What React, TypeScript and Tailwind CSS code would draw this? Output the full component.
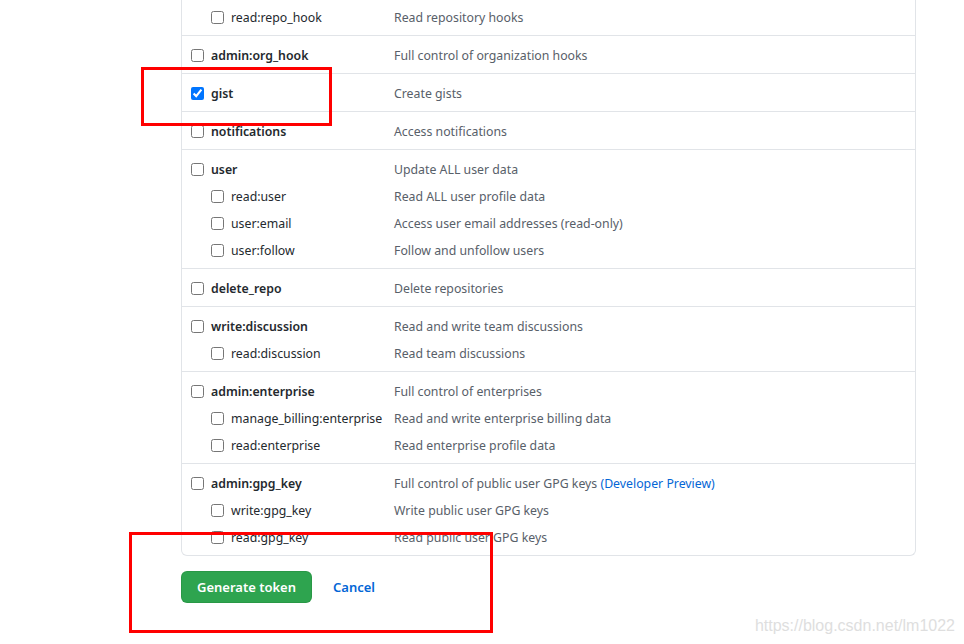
import React from "react";

type Sub = { name: string; desc: string };
type Group = { name: string; desc: React.ReactNode; subs?: Sub[]; checked?: boolean };

const groups: Group[] = [
  { name: "admin:org_hook", desc: "Full control of organization hooks" },
  { name: "gist", desc: "Create gists", checked: true },
  { name: "notifications", desc: "Access notifications" },
  {
    name: "user",
    desc: "Update ALL user data",
    subs: [
      { name: "read:user", desc: "Read ALL user profile data" },
      { name: "user:email", desc: "Access user email addresses (read-only)" },
      { name: "user:follow", desc: "Follow and unfollow users" },
    ],
  },
  { name: "delete_repo", desc: "Delete repositories" },
  {
    name: "write:discussion",
    desc: "Read and write team discussions",
    subs: [{ name: "read:discussion", desc: "Read team discussions" }],
  },
  {
    name: "admin:enterprise",
    desc: "Full control of enterprises",
    subs: [
      { name: "manage_billing:enterprise", desc: "Read and write enterprise billing data" },
      { name: "read:enterprise", desc: "Read enterprise profile data" },
    ],
  },
  {
    name: "admin:gpg_key",
    desc: (
      <>
        Full control of public user GPG keys{" "}
        <span className="text-[#0366d6]">(Developer Preview)</span>
      </>
    ),
    subs: [
      { name: "write:gpg_key", desc: "Write public user GPG keys" },
      { name: "read:gpg_key", desc: "Read public user GPG keys" },
    ],
  },
];

function Box({ checked }: { checked?: boolean }) {
  return (
    <input
      type="checkbox"
      defaultChecked={checked}
      className="m-0 h-[13px] w-[13px] shrink-0 accent-[#0075ff]"
    />
  );
}

function SubRow({ s, first }: { s: Sub; first?: boolean }) {
  return (
    <div className={`${first ? "" : "mt-[6px]"} flex items-center`}>
      <div className="flex w-[203px] items-center gap-[7px] pl-[20px]">
        <Box />
        <span className="whitespace-nowrap text-[#24292e]">{s.name}</span>
      </div>
      <div className="whitespace-nowrap text-[#586069]">{s.desc}</div>
    </div>
  );
}

export default function App() {
  return (
    <div
      className="relative h-[644px] w-[964px] overflow-hidden bg-white text-[12.3px] leading-[21px]"
      style={{ fontFamily: '"Noto Sans", "Open Sans", sans-serif' }}
    >
      <div className="ml-[181px] w-[735px]">
        <div className="overflow-hidden rounded-b-md border border-t-0 border-[#e1e4e8]">
          <div className="pb-[7px] pl-[9px] pt-[7px]">
            <SubRow s={{ name: "read:repo_hook", desc: "Read repository hooks" }} first />
          </div>
          {groups.map((g) => (
            <div key={g.name} className="border-t border-[#e1e4e8] pb-[7px] pl-[9px] pt-[9px]">
              <div className="flex items-center">
                <div className="flex w-[203px] items-center gap-[7px]">
                  <Box checked={g.checked} />
                  <span className="whitespace-nowrap font-semibold text-[#24292e]">{g.name}</span>
                </div>
                <div className="whitespace-nowrap text-[#586069]">{g.desc}</div>
              </div>
              {g.subs?.map((s) => (
                <SubRow key={s.name} s={s} />
              ))}
            </div>
          ))}
        </div>
        <div className="mt-[15px] flex items-center gap-[21px] text-[13px]">
          <button className="h-[32px] w-[131px] rounded-md border border-[#22863a]/40 bg-[#2ea44f] font-semibold text-white">
            Generate token
          </button>
          <button className="font-semibold text-[#0366d6]">Cancel</button>
        </div>
      </div>

      <div className="absolute left-[141px] top-[67px] h-[59px] w-[191px] border-[3px] border-[#ff0000]" />
      <div className="absolute left-[129px] top-[532px] h-[101px] w-[364px] border-[3px] border-[#ff0000]" />

      <div
        className="absolute right-[9px] top-[614px] text-[16px] leading-[24px] text-[#dedede]"
        style={{ fontFamily: '"Liberation Sans", Arial, sans-serif' }}
      >
        https://blog.csdn.net/lm1022
      </div>
    </div>
  );
}
